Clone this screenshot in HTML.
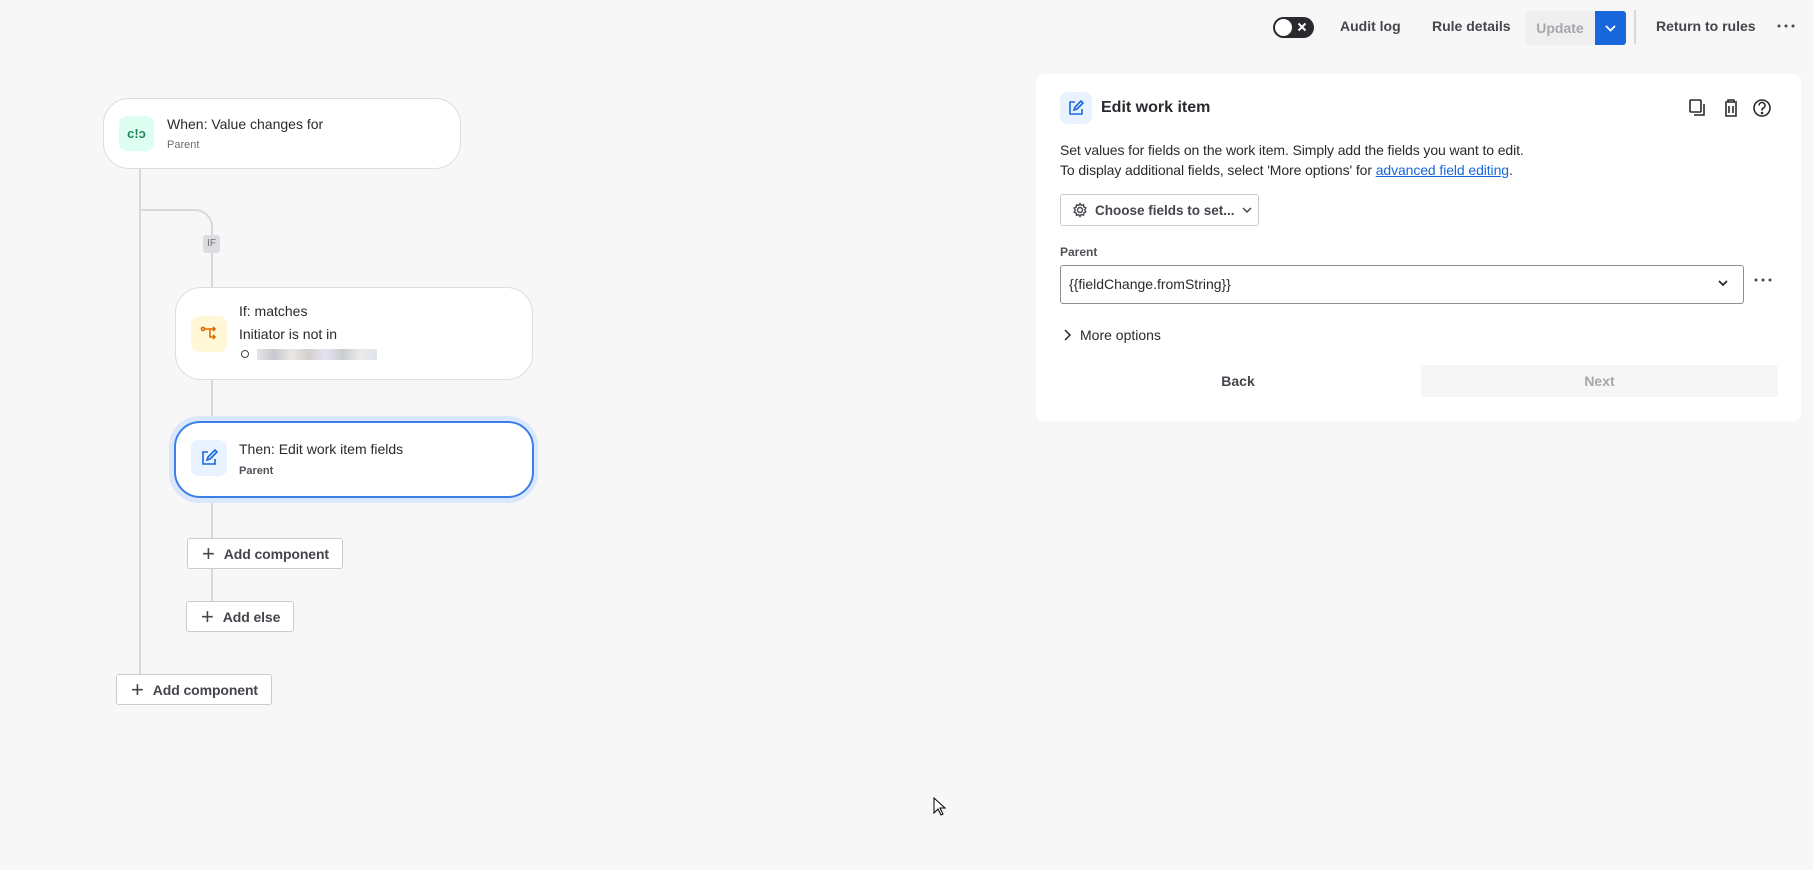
<!DOCTYPE html>
<html><head><meta charset="utf-8"><style>
*{box-sizing:border-box;margin:0;padding:0}
body{width:1813px;height:870px;background:#f7f7f7;font-family:"Liberation Sans",sans-serif;color:#292a2e;position:relative;overflow:hidden}
.a{position:absolute;white-space:nowrap}
.card{position:absolute;background:#fff;border:1px solid #dcdde0;border-radius:26px}
.ic{position:absolute;border-radius:8px;display:flex;align-items:center;justify-content:center}
.btn{position:absolute;background:#fff;border:1px solid #c9cbcf;border-radius:3px;font-size:14px;font-weight:bold;color:#44464c;display:flex;align-items:center;padding-left:14px;white-space:nowrap;letter-spacing:-.1px}
.btn b{font-size:22px;font-weight:normal;margin-right:9px;line-height:1}
.line{position:absolute;background:#d8d9dc}
.top{position:absolute;font-size:14px;font-weight:bold;color:#44464c;top:18px;white-space:nowrap}
</style></head><body>
<div class="a" style="left:1273px;top:17px;width:41px;height:21px;border-radius:11px;background:#292a2e"></div>
<div class="a" style="left:1275px;top:19px;width:17px;height:17px;border-radius:50%;background:#fff"></div>
<svg class="a" style="left:1296px;top:21px" width="12" height="12"><path d="M2.5 2.5l7 7M9.5 2.5l-7 7" stroke="#fff" stroke-width="2"/></svg>
<div class="top" style="left:1340px">Audit log</div>
<div class="top" style="left:1432px">Rule details</div>
<div class="a" style="left:1525px;top:11px;width:70px;height:34px;background:#efefef;border-radius:3px 0 0 3px;color:#a5a7ab;font-size:14px;font-weight:bold;text-align:center;line-height:34px">Update</div>
<div class="a" style="left:1595px;top:11px;width:31px;height:34px;background:#1868db;border-radius:0 3px 3px 0"><svg width="31" height="34"><path d="M11 15l4.5 4.5L20 15" fill="none" stroke="#fff" stroke-width="1.8"/></svg></div>
<div class="a" style="left:1634px;top:10px;width:2px;height:34px;background:#d8d9dc"></div>
<div class="top" style="left:1656px">Return to rules</div>
<svg class="a" style="left:1776px;top:23px" width="20" height="6" fill="#44464c"><circle cx="3" cy="3" r="1.5"/><circle cx="10" cy="3" r="1.5"/><circle cx="17" cy="3" r="1.5"/></svg>

<div class="line" style="left:139px;top:169px;width:2px;height:505px"></div>
<div class="a" style="left:140px;top:209px;width:73px;height:30px;border-top:2px solid #d8d9dc;border-right:2px solid #d8d9dc;border-top-right-radius:18px"></div>
<div class="line" style="left:211px;top:239px;width:2px;height:362px"></div>
<div class="a" style="left:203px;top:235px;width:17px;height:18px;background:#dcdde0;border-radius:3px;font-size:10px;color:#6b6e76;text-align:center;line-height:18px">IF</div>

<div class="card" style="left:103px;top:98px;width:358px;height:71px"></div>
<div class="ic" style="left:119px;top:116px;width:35px;height:35px;background:#dcfff1;color:#1f845a;font-size:13px;font-weight:bold">c!ↄ</div>
<div class="a" style="left:167px;top:116px;font-size:14px">When: Value changes for</div>
<div class="a" style="left:167px;top:139px;font-size:11px;color:#6b6e76">Parent</div>

<div class="card" style="left:175px;top:287px;width:358px;height:93px"></div>
<div class="ic" style="left:191px;top:316px;width:36px;height:36px;background:#fff7d6"><svg width="20" height="20" fill="none" stroke="#e06c00" stroke-width="1.6"><circle cx="4" cy="5" r="1.6"/><path d="M6 5h10M11 5v8h5M14 11l2 2-2 2M14 3l2 2-2 2"/></svg></div>
<div class="a" style="left:239px;top:303px;font-size:14px">If: matches</div>
<div class="a" style="left:239px;top:326px;font-size:14px">Initiator is not in</div>
<div class="a" style="left:241px;top:350px;width:8px;height:8px;border:1.5px solid #44464c;border-radius:50%"></div>
<div class="a" style="left:257px;top:349px;width:120px;height:11px;background:linear-gradient(90deg,#e0dcdc,#b8bcc4,#e4e0e0,#c8c4c0,#dde,#bcc0c4,#e8e4e4,#d8dde8);opacity:.8"></div>

<div class="a" style="left:169px;top:416px;width:369px;height:87px;border-radius:30px;background:#dbe7fb"></div>
<div class="card" style="left:174px;top:421px;width:360px;height:77px;border:2px solid #3d7fe8"></div>
<div class="ic" style="left:191px;top:440px;width:36px;height:36px;background:#e9f2ff"><svg width="20" height="20" fill="none" stroke="#1868db" stroke-width="1.6"><path d="M9 4H4v12h12v-5M8 12l1-3 7-7 2 2-7 7z"/></svg></div>
<div class="a" style="left:239px;top:441px;font-size:14px">Then: Edit work item fields</div>
<div class="a" style="left:239px;top:465px;font-size:11px;font-weight:bold;color:#505258">Parent</div>

<div class="btn" style="left:187px;top:538px;width:156px;height:31px"><b>+</b>Add component</div>
<div class="btn" style="left:186px;top:601px;width:108px;height:31px"><b>+</b>Add else</div>
<div class="btn" style="left:116px;top:674px;width:156px;height:31px"><b>+</b>Add component</div>

<svg class="a" style="left:933px;top:797px" width="14" height="20"><path d="M1 1v15l4-4 3 6 2-1-3-6h5z" fill="#fff" stroke="#000"/></svg>

<div class="a" style="left:1036px;top:74px;width:765px;height:347px;background:#fff;border-radius:8px"></div>
<div class="ic" style="left:1060px;top:92px;width:32px;height:32px;background:#e9f2ff"><svg width="18" height="18" fill="none" stroke="#1868db" stroke-width="1.6"><path d="M8 3H3v12h12v-5M7 11l1-3 6-6 2 2-6 6z"/></svg></div>
<div class="a" style="left:1101px;top:99px;font-size:16px;font-weight:bold">Edit work item</div>
<svg class="a" style="left:1688px;top:98px" width="84" height="20" fill="none" stroke="#292a2e" stroke-width="1.6"><rect x="2" y="2" width="11" height="12" rx="1"/><path d="M6 17h10V6"/><path d="M37 4h12M40 4V2h6v2M38 5v13h10V5M41 8v7M45 8v7"/><circle cx="74" cy="10" r="8"/><path d="M71 7.5a3 3 0 1 1 4 2.8c-1 .4-1 1-1 2.2"/><circle cx="74" cy="15" r=".5" fill="#292a2e"/></svg>
<div class="a" style="left:1060px;top:140px;font-size:14px;line-height:20px;color:#292a2e;letter-spacing:-.1px">Set values for fields on the work item. Simply add the fields you want to edit.<br>To display additional fields, select 'More options' for <span style="color:#1868db;text-decoration:underline">advanced field editing</span>.</div>
<div class="a" style="left:1060px;top:194px;width:199px;height:32px;border:1px solid #c9cbcf;border-radius:3px;font-size:13.5px;font-weight:bold;color:#44464c;display:flex;align-items:center;padding-left:11px"><svg width="16" height="16" fill="none" stroke="#44464c" stroke-width="1.4" style="margin-right:7px"><circle cx="8" cy="8" r="2.5"/><path d="M8 1.5l1.3 1.8 2.2-.6.3 2.2 2 1-1 2 1 2-2 1-.3 2.2-2.2-.6L8 14.5l-1.3-1.8-2.2.6-.3-2.2-2-1 1-2-1-2 2-1 .3-2.2 2.2.6z"/></svg>Choose fields to set...<svg width="14" height="10" style="margin-left:5px"><path d="M3 3l4 4 4-4" fill="none" stroke="#44464c" stroke-width="1.5"/></svg></div>
<div class="a" style="left:1060px;top:245px;font-size:12px;font-weight:bold;color:#505258">Parent</div>
<div class="a" style="left:1060px;top:265px;width:684px;height:39px;border:1px solid #8c8f97;border-radius:3px;font-size:14px;line-height:37px;padding-left:8px">{{fieldChange.fromString}}</div>
<svg class="a" style="left:1716px;top:278px" width="14" height="10"><path d="M3 3l4 4 4-4" fill="none" stroke="#292a2e" stroke-width="1.8"/></svg>
<svg class="a" style="left:1753px;top:277px" width="20" height="6" fill="#44464c"><circle cx="3" cy="3" r="1.5"/><circle cx="10" cy="3" r="1.5"/><circle cx="17" cy="3" r="1.5"/></svg>
<svg class="a" style="left:1062px;top:328px" width="10" height="14"><path d="M3 2l5 5-5 5" fill="none" stroke="#292a2e" stroke-width="1.5"/></svg>
<div class="a" style="left:1080px;top:327px;font-size:14px">More options</div>
<div class="a" style="left:1060px;top:365px;width:356px;height:32px;font-size:14px;font-weight:bold;color:#44464c;text-align:center;line-height:32px">Back</div>
<div class="a" style="left:1421px;top:365px;width:357px;height:32px;background:#f6f6f6;border-radius:3px;font-size:14px;font-weight:bold;color:#a5a7ab;text-align:center;line-height:32px">Next</div>
</body></html>
